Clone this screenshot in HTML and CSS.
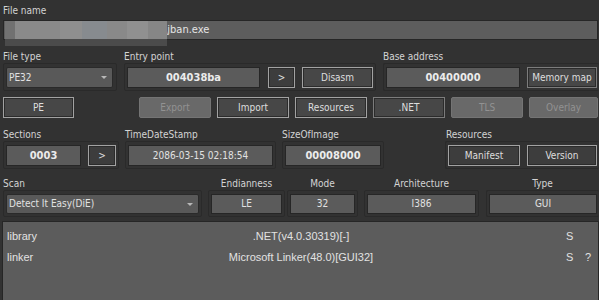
FILE: index.html
```html
<!DOCTYPE html>
<html lang="en">
<head>
  <meta charset="UTF-8">
  <title>Detect It Easy</title>
  <link rel="stylesheet" href="styles.css">
</head>
<body>
  <!-- nom du fichier (le chemin est masque) -->
  <div class="lbl top-lbl">File name</div>
  <div class="filename">
    <span class="blur"></span>
    <span>\jban.exe</span>
  </div>

  <!-- type / entry point / base -->
  <div class="row row2">
    <div class="group g-filetype">
      <div class="lbl">File type</div>
      <div class="frame">
        <div class="combo w-filetype">PE32<span class="arrow"></span></div>
      </div>
    </div>
    <div class="group g-entry">
      <div class="lbl">Entry point</div>
      <div class="frame">
        <div class="field bold w-entry">004038ba</div>
        <button class="btn dark w-go">&gt;</button>
        <button class="btn w-disasm">Disasm</button>
      </div>
    </div>
    <div class="group g-base">
      <div class="lbl">Base address</div>
      <div class="frame">
        <div class="field bold w-base">00400000</div>
        <button class="btn dim w-memmap">Memory map</button>
      </div>
    </div>
  </div>

  <!-- boutons PE -->
  <div class="row row3">
    <button class="btn w-pe">PE</button>
    <div class="btn-set">
      <button class="btn off">Export</button>
      <button class="btn">Import</button>
      <button class="btn">Resources</button>
      <button class="btn dim">.NET</button>
      <button class="btn off">TLS</button>
      <button class="btn off last">Overlay</button>
    </div>
  </div>

  <!-- sections / timestamp / size / resources -->
  <div class="row row4">
    <div class="group g-sections">
      <div class="lbl">Sections</div>
      <div class="frame">
        <div class="field bold w-sections">0003</div>
        <button class="btn dark w-go2">&gt;</button>
      </div>
    </div>
    <div class="group g-time">
      <div class="lbl">TimeDateStamp</div>
      <div class="frame">
        <div class="field w-time">2086-03-15 02:18:54</div>
      </div>
    </div>
    <div class="group g-size">
      <div class="lbl">SizeOfImage</div>
      <div class="frame">
        <div class="field bold w-size">00008000</div>
      </div>
    </div>
    <div class="group g-res">
      <div class="lbl">Resources</div>
      <div class="frame">
        <button class="btn dark w-manifest">Manifest</button>
        <button class="btn dark w-version">Version</button>
      </div>
    </div>
  </div>

  <!-- scan -->
  <div class="row row5">
    <div class="group g-scan">
      <div class="lbl">Scan</div>
      <div class="frame">
        <div class="combo w-scan">Detect It Easy(DiE)<span class="arrow"></span></div>
      </div>
    </div>
    <div class="group g-endian centered">
      <div class="lbl">Endianness</div>
      <div class="frame">
        <div class="field w-endian">LE</div>
      </div>
    </div>
    <div class="group g-mode centered">
      <div class="lbl">Mode</div>
      <div class="frame">
        <div class="field w-mode">32</div>
      </div>
    </div>
    <div class="group g-arch centered">
      <div class="lbl">Architecture</div>
      <div class="frame">
        <div class="field w-arch">I386</div>
      </div>
    </div>
    <div class="group g-type centered">
      <div class="lbl">Type</div>
      <div class="frame">
        <div class="field w-type">GUI</div>
      </div>
    </div>
  </div>

  <!-- resultats -->
  <div class="results">
    <div class="res-row">
      <span>library</span>
      <span class="res-name">.NET(v4.0.30319)[-]</span>
      <span></span>
      <span>S</span>
      <span></span>
    </div>
    <div class="res-row">
      <span>linker</span>
      <span class="res-name">Microsoft Linker(48.0)[GUI32]</span>
      <span></span>
      <span>S</span>
      <span>?</span>
    </div>
  </div>
</body>
</html>
```

FILE: styles.css
```css
html, body {
  margin: 0;
  height: 300px;
  overflow: hidden;
}

body {
  display: flex;
  flex-direction: column;
  background: #323232;
  color: #d4d4d4;
  font-family: "DejaVu Sans Condensed", "DejaVu Sans", sans-serif;
  font-size: 10px;
}

.lbl {
  height: 12px;
  line-height: 12px;
  white-space: nowrap;
}

.top-lbl {
  margin: 5px 0 0 3px;
}

.filename {
  position: relative;
  margin: 3px 1px 0 3px;
  height: 18px;
  line-height: 18px;
  padding-left: 160px;
  border: 1px solid #262626;
  background: #5d5d5d;
  color: #e4e4e4;
  font-size: 11px;
}

.blur {
  position: absolute;
  left: 1px;
  top: 0;
  width: 162px;
  height: 25px;
  background:
    linear-gradient(to right, #717171 0 10px, #8a8a8a 10px 55px, #8f8f8f 55px 77px,
      #878b8f 77px 102px, #898989 102px 122px, #909090 122px 143px, #868686 143px) top / 100% 18px no-repeat,
    #4b4b4b;
}

.row {
  display: flex;
  flex-shrink: 0;
  padding-left: 3px;
}

.group {
  display: flex;
  flex-direction: column;
}

.centered .lbl {
  text-align: center;
}

.frame {
  display: flex;
  padding: 3px 2px 2px 2px;
  border: 1px solid #2a2a2a;
  border-radius: 2px;
}

.field, .combo, .btn {
  box-sizing: border-box;
  height: 21px;
  line-height: 19px;
  font-family: inherit;
  font-size: 10px;
  white-space: nowrap;
}

.field {
  border: 1px solid #262626;
  background: #5b5b5b;
  color: #e2e2e2;
  text-align: center;
}

.bold {
  font-weight: bold;
  font-size: 11px;
  color: #ececec;
}

.combo {
  position: relative;
  padding-left: 2px;
  border: 1px solid #2a2a2a;
  border-radius: 2px;
  background: #595959;
  color: #e2e2e2;
}

.arrow {
  position: absolute;
  right: 5px;
  top: 8px;
  border-left: 3px solid transparent;
  border-right: 3px solid transparent;
  border-top: 3px solid #b8b8b8;
}

.btn {
  margin: 0;
  padding: 0;
  border: 1px solid #a2a2a2;
  background: #474747;
  box-shadow: inset 0 0 0 1px #2b2b2b;
  color: #dedede;
  text-align: center;
}

.btn.dark {
  background: #3d3d3d;
}

.btn.dim {
  border-color: #7c7c7c;
}

.btn.off {
  border-color: #747474;
  border-radius: 2px;
  background: #696969;
  box-shadow: none;
  color: #929292;
}

/* rangee 2 */
.row2 {
  margin-top: 11px;
  gap: 7px;
}

.g-filetype { width: 114px; }
.w-filetype { width: 107px; }
.g-entry .frame { gap: 7px; }
.w-entry { width: 133px; margin-right: 1px; }
.w-go { width: 27px; }
.w-disasm { width: 71px; }
.g-base { flex: 1; }
.g-base .frame { gap: 7px; padding-right: 0; border-right: 0; }
.w-base { width: 134px; }
.w-memmap { width: 70px; }

/* rangee 3 */
.row3 {
  margin-top: 6px;
}

.w-pe { width: 71px; }

.btn-set {
  display: flex;
  gap: 6px;
  margin-left: 65px;
}

.btn-set .btn { width: 72px; }
.btn-set .btn.last { width: 69px; }

/* rangee 4 */
.row4 {
  margin-top: 11px;
  gap: 6px;
}

.g-sections .frame { gap: 7px; }
.w-sections { width: 75px; }
.w-go2 { width: 28px; }
.w-time { width: 145px; }
.w-size { width: 96px; }
.g-res { flex: 1; margin-left: 55px; }
.g-res .lbl { padding-left: 1px; }
.g-res .frame { gap: 7px; padding-right: 0; border-right: 0; }
.w-manifest { width: 72px; }
.w-version { width: 70px; }

/* rangee 5 */
.row5 {
  margin-top: 9px;
}

.row5 .field, .row5 .combo {
  height: 20px;
  line-height: 18px;
}

.g-scan { margin-right: 6px; }
.w-scan { width: 193px; }
.w-endian { width: 71px; }
.g-mode { margin-left: 2px; margin-right: 6px; }
.w-mode { width: 65px; }
.g-arch { margin-right: 7px; }
.w-arch { width: 109px; }
.g-type { flex: 1; }
.g-type .frame { padding-right: 0; border-right: 0; }
.w-type { width: 108px; }

/* resultats */
.results {
  flex: 1;
  min-height: 0;
  margin: 4px 0 0 2px;
  padding: 4px 0 0 4px;
  border: 1px solid #262626;
  border-bottom: 0;
  background: #5c5c5c;
  color: #e2e2e2;
  font-family: "Liberation Sans", Arial, sans-serif;
  font-size: 11px;
}

.res-row {
  display: grid;
  grid-template-columns: 114px 360px 85px 19px auto;
  height: 21px;
  line-height: 21px;
}

.res-name {
  text-align: center;
}
```
